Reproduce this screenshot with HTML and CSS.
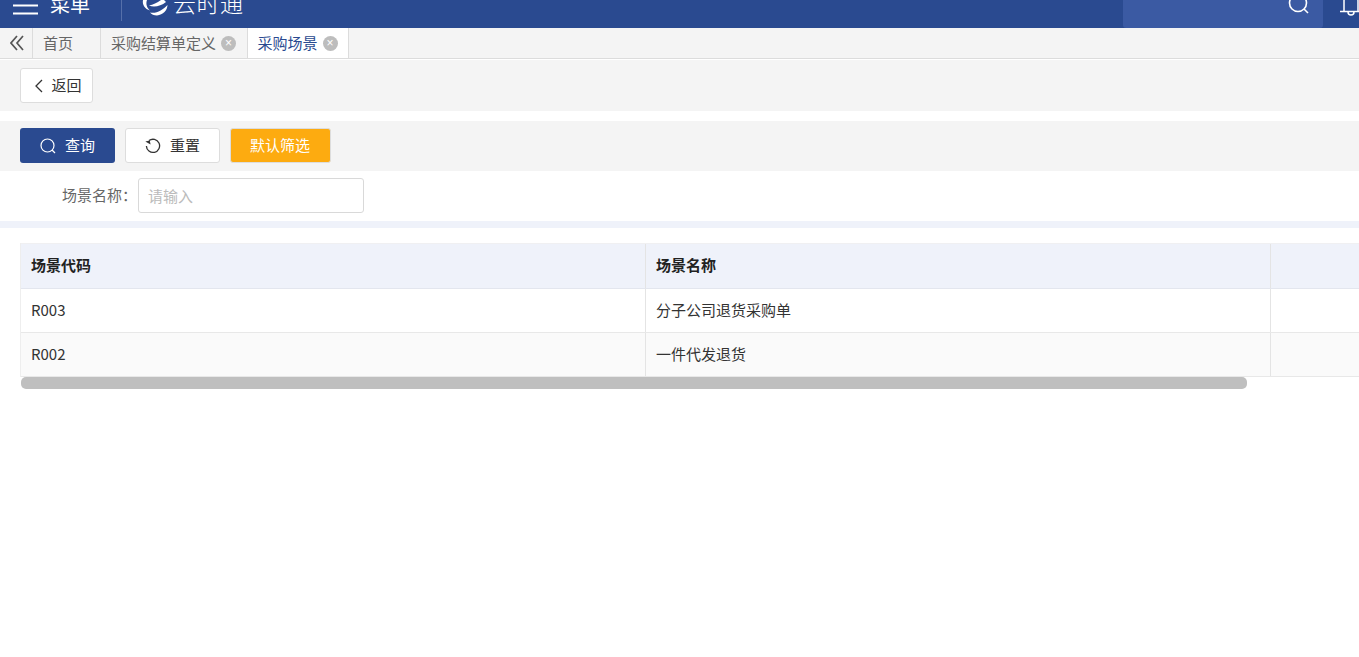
FILE: index.html
```html
<!DOCTYPE html>
<html lang="zh-CN">
<head>
<meta charset="utf-8">
<title>采购场景</title>
<link rel="stylesheet" href="styles.css">
</head>
<body>
<header class="topbar">
  <div class="menu">
    <svg class="menu-icon" width="25" height="20" viewBox="0 0 25 20"><path d="M0 1.5h25M0 9.5h25M0 17.5h25" stroke="#fff" stroke-width="2" fill="none"/></svg>
    <span class="menu-text">菜单</span>
  </div>
  <div class="divider"></div>
  <div class="brand">
    <svg class="brand-icon" width="26" height="16" viewBox="0 0 26 16"><path d="M1 0C0 5 3 9 8 10.5 5 8 3.5 4 5 0zM7 5.500C12 8 19 6 24 2L22 0H19C15 3 11 4.500 7 5.500zM8 12.500C14 14 21 10 25.500 5 25.500 10 21 15 15 15.500 12 15.500 9.500 14.500 8 12.500z" fill="#fff"/></svg>
    <span class="brand-text">云时通</span>
  </div>
  <div class="search-box">
    <svg width="22" height="22" viewBox="0 0 22 22"><circle cx="10" cy="10" r="8.5" stroke="#fff" stroke-width="1.6" fill="none"/><path d="M16 16l4 4" stroke="#fff" stroke-width="1.6"/></svg>
  </div>
  <svg class="bell" width="22" height="26" viewBox="0 0 22 26"><path d="M4 19V9a7 7 0 0 1 14 0v10M0 19.500h22M8 20a3 3 0 0 0 6 0" stroke="#fff" stroke-width="1.500" fill="none"/></svg>
</header>

<nav class="tabs">
  <div class="tab-toggle">
    <svg width="14" height="16" viewBox="0 0 14 16"><path d="M7 1L1 8l6 7M13 1L7 8l6 7" stroke="#555" stroke-width="1.700" fill="none"/></svg>
  </div>
  <div class="tab tab-home">首页</div>
  <div class="tab tab-def">采购结算单定义<span class="tab-close">×</span></div>
  <div class="tab tab-active">采购场景<span class="tab-close">×</span></div>
</nav>

<section class="back-row">
  <button class="btn btn-back">
    <svg width="9" height="14" viewBox="0 0 9 14"><path d="M8 1L2 7l6 6" stroke="#333" stroke-width="1.300" fill="none"/></svg>
    <span class="btn-text">返回</span>
  </button>
</section>

<section class="toolbar">
  <button class="btn btn-primary">
    <svg width="16" height="16" viewBox="0 0 16 16"><circle cx="7.500" cy="7.500" r="6.500" stroke="#fff" stroke-width="1.200" fill="none"/><path d="M12 12l3 3" stroke="#fff" stroke-width="1.200"/></svg>
    <span class="btn-text">查询</span>
  </button>
  <button class="btn btn-reset">
    <svg width="16" height="16" viewBox="0 0 16 16"><path d="M4 2.600A6.600 6.600 0 1 1 1.400 8" stroke="#333" stroke-width="1.300" fill="none"/><path d="M0.500 3h4.500v4z" fill="#333" transform="rotate(-12 3 4)"/></svg>
    <span class="btn-text">重置</span>
  </button>
  <button class="btn btn-filter"><span class="btn-text">默认筛选</span></button>
</section>

<section class="form-row">
  <label class="field-label" for="scene-name">场景名称：</label>
  <input class="field-input" id="scene-name" placeholder="请输入">
</section>

<div class="band"></div>

<section class="table-wrap">
  <div class="table">
    <div class="row row-head">
      <div class="cell"><span class="cell-text">场景代码</span></div>
      <div class="cell"><span class="cell-text">场景名称</span></div>
      <div class="cell cell-last"></div>
    </div>
    <div class="row">
      <div class="cell"><span class="cell-text">R003</span></div>
      <div class="cell"><span class="cell-text">分子公司退货采购单</span></div>
      <div class="cell cell-last"></div>
    </div>
    <div class="row row-alt">
      <div class="cell"><span class="cell-text">R002</span></div>
      <div class="cell"><span class="cell-text">一件代发退货</span></div>
      <div class="cell cell-last"></div>
    </div>
  </div>
  <div class="scroll-track"><div class="scroll-thumb"></div></div>
</section>
</body>
</html>
```
FILE: styles.css
```css
* { box-sizing: border-box; }
html, body { margin: 0; padding: 0; height: 100%; overflow: hidden; background: #fff; }
body { font-family: "Noto Sans CJK SC", "Liberation Sans", sans-serif; font-size: 15px; color: #333; }

.topbar { height: 28px; background: #2a4a90; display: flex; align-items: flex-end; overflow: hidden; color: #fff; }
.menu { display: flex; align-items: flex-end; margin-left: 13px; width: 108px; flex: none; }
.menu-icon { flex: none; margin-bottom: 12px; }
.menu-text { font-size: 20px; line-height: 26px; margin-left: 12px; margin-bottom: 11px; flex: none; }
.divider { width: 1px; height: 30px; background: #5670aa; margin-bottom: 7px; flex: none; }
.brand { display: flex; align-items: flex-end; margin-left: 20px; flex: none; }
.brand-icon { flex: none; margin-bottom: 12px; }
.brand-text { font-size: 23px; line-height: 30px; margin-left: 5px; margin-bottom: 11px; font-weight: 300; letter-spacing: 0.5px; }
.search-box { margin-left: auto; width: 200px; height: 28px; background: #3b5aa3; border-radius: 0 0 3px 3px; display: flex; justify-content: flex-end; align-items: flex-end; padding: 0 13px 13px 0; overflow: visible; flex: none; }
.search-box svg { flex: none; }
.bell { flex: none; margin: 0 -3px 10px 17px; }

.tabs { height: 31px; background: #f4f4f4; border-bottom: 1px solid #dcdcdc; display: flex; color: #666; }
.tab-toggle { width: 33px; border-right: 1px solid #dcdcdc; display: flex; align-items: center; justify-content: center; padding-left: 1px; }
.tab { display: flex; align-items: center; border-right: 1px solid #dcdcdc; padding-left: 10px; padding-bottom: 1px; }
.tab-home { width: 68px; }
.tab-def { width: 147px; }
.tab-active { width: 101px; background: #fff; color: #2a4a90; padding-left: 9.500px; }
.tab-close { width: 15px; height: 15px; border-radius: 50%; background: #bdbdbd; color: #fff; font-size: 12px; line-height: 15px; text-align: center; margin: 2px 0 0 5px; font-family: "Liberation Sans", sans-serif; }

.back-row { margin-top: 1px; height: 51px; background: #f4f4f4; padding: 8px 20px 0; }
.btn { display: inline-flex; align-items: center; justify-content: center; height: 35px; border-radius: 3px; font: inherit; padding: 0; cursor: pointer; }
.btn-text { position: relative; top: -1px; }
.btn-back { width: 73px; background: #fff; border: 1px solid #ddd; color: #333; gap: 8px; padding: 0 1px 0 4px; }

.toolbar { margin-top: 10px; height: 50px; background: #f4f4f4; padding: 7px 20px 0; display: flex; align-items: flex-start; gap: 10px; }
.btn-primary { width: 95px; background: #2a4a90; border: 0; color: #fff; gap: 9px; }
.btn-reset { width: 95px; background: #fff; border: 1px solid #ddd; color: #333; gap: 9px; }
.btn-filter { width: 101px; background: #fdab10; border: 1px solid #ddd; color: #fff; padding-right: 1px; }

.form-row { height: 50px; background: #fff; display: flex; align-items: flex-start; padding-top: 7px; }
.field-label { width: 138px; height: 35px; line-height: 33px; text-align: right; color: #666; white-space: nowrap; padding-right: 1px; }
.field-input { width: 226px; height: 35px; border: 1px solid #d9d9d9; border-radius: 3px; padding: 0 9px; font: inherit; outline: none; color: #333; }
.field-input::placeholder { color: #bbb; opacity: 1; }

.band { height: 7px; background: #eff2fa; }

.table-wrap { margin: 15px 0 0 20px; overflow: hidden; }
.table { width: 1400px; border-left: 1px solid #eeeeee; }
.row { display: grid; grid-template-columns: 625px 625px 150px; height: 44px; border-bottom: 1px solid #e8e8e8; background: #fff; }
.row-head { height: 46px; background: #eff2fa; border-top: 1px solid #f0f0f2; border-bottom-color: #e3e6ee; font-weight: 700; color: #222; }
.row-alt { background: #fafafa; }
.cell { display: flex; align-items: center; padding-left: 10px; border-right: 1px solid #e4e4e4; }
.cell-text { position: relative; top: -1px; }
.row-head .cell-text { top: -2px; }
.cell-last { border-right: 0; }
.scroll-track { height: 12px; }
.scroll-thumb { width: 1226px; height: 12px; margin-left: 1px; background: #bfbfbf; border-radius: 5px; }
```
